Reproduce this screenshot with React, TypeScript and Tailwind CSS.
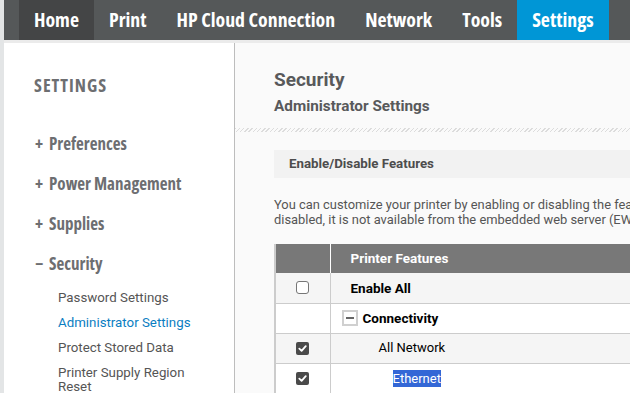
function CheckBox({ checked }: { checked: boolean }) {
  if (checked) {
    return (
      <span className="flex h-[13px] w-[13px] items-center justify-center rounded-[2px] bg-[#4a4a4a]">
        <svg width="9" height="9" viewBox="0 0 10 10">
          <path d="M1.5 5.2 L4 7.6 L8.6 2.4" fill="none" stroke="#fff" strokeWidth="2" strokeLinecap="round" strokeLinejoin="round" />
        </svg>
      </span>
    );
  }
  return <span className="block h-[13px] w-[13px] rounded-[3px] border border-[#767676] bg-white" />;
}

const cond = "font-['Open_Sans',sans-serif] [font-stretch:75%]";

export default function App() {
  const tabs = ['Home', 'Print', 'HP Cloud Connection', 'Network', 'Tools', 'Settings'];
  return (
    <div className="flex h-[393px] w-[630px] overflow-hidden bg-[#fafafa] font-['Roboto',sans-serif]">
      <div className="w-[4px] shrink-0 bg-[#e3e5e6]" />
      <div className="flex min-w-0 flex-1 flex-col">
        <nav className={`flex h-[40px] shrink-0 bg-[#555859] pl-[15px] ${cond}`}>
          {tabs.map((t) => (
            <div
              key={t}
              className={`flex items-center px-[15px] pb-[1px] text-[19.8px] font-bold leading-none text-white ${
                t === 'Home' ? 'bg-[#444546]' : t === 'Settings' ? 'bg-[#0096d6]' : ''
              }`}
            >
              {t}
            </div>
          ))}
        </nav>
        <div className="h-[3px] shrink-0 bg-[#ebebeb]" />
        <div className="flex min-h-0 flex-1">
          <aside className="w-[231px] shrink-0 border-r border-[#bdbdbd] bg-white pl-[30px]">
            <div className={`pt-[32px] text-[18px] font-bold leading-[20px] tracking-[1px] text-[#6d6e71] ${cond}`}>SETTINGS</div>
            <ul className={`mt-[39px] flex flex-col gap-[20px] text-[17px] font-bold leading-[20px] text-[#6d6e71] ${cond}`}>
              <li className="flex items-center"><span className="w-[15px] pl-[1px]">+</span>Preferences</li>
              <li className="flex items-center"><span className="w-[15px] pl-[1px]">+</span>Power Management</li>
              <li className="flex items-center"><span className="w-[15px] pl-[1px]">+</span>Supplies</li>
              <li className="flex items-center"><span className="w-[15px] pl-[1px]">−</span>Security</li>
            </ul>
            <ul className="mt-[17px] flex flex-col gap-[11px] pl-[24px] text-[13.3px] leading-[14px] text-[#555555]">
              <li>Password Settings</li>
              <li className="text-[#0a7ec2]">Administrator Settings</li>
              <li>Protect Stored Data</li>
              <li>Printer Supply Region<br />Reset</li>
            </ul>
          </aside>
          <main className="min-w-0 flex-1">
            <div className="pl-[39px] pt-[25px] text-[#58595b]">
              <h1 className="text-[19px] font-bold leading-[24px]">Security</h1>
              <h2 className="mt-[4px] text-[15.3px] font-bold leading-[20px]">Administrator Settings</h2>
            </div>
            <div className="mt-[12px] h-[4px] w-full bg-[repeating-linear-gradient(135deg,#dcdcdc_0px,#dcdcdc_1px,transparent_1px,transparent_3px)]" />
            <div className="ml-[39px] mt-[18px] flex h-[28px] w-[500px] items-center bg-[#f2f2f2] pl-[15px] text-[13.3px] font-bold text-[#4d4d4d]">
              Enable/Disable Features
            </div>
            <div className="ml-[39px] mt-[19px] text-[12.9px] leading-[15px] text-[#555555]">
              <div className="whitespace-nowrap">You can customize your printer by enabling or disabling the features below. When a feature is</div>
              <div className="whitespace-nowrap">disabled, it is not available from the embedded web server (EWS), the printer control panel, or</div>
            </div>
            <table className="ml-[39px] mt-[17px] w-[500px] border-collapse border-l-2 border-[#cccccc] text-[13.5px]">
              <tbody>
                <tr className="h-[29px] bg-[#787878] text-white">
                  <td className="w-[55px] border-r border-white" />
                  <td className="pl-[20px] font-bold">Printer Features</td>
                </tr>
                <tr className="h-[30px] border-b border-[#cccccc] bg-[#f5f5f5]">
                  <td className="border-r border-[#cccccc]"><div className="flex justify-center"><CheckBox checked={false} /></div></td>
                  <td className="pl-[20px] font-bold text-black">Enable All</td>
                </tr>
                <tr className="h-[30px] border-b border-[#cccccc] bg-white">
                  <td className="border-r border-[#cccccc]" />
                  <td className="pl-[11px] font-bold text-black">
                    <div className="flex items-center gap-[5px]">
                      <span className="flex h-[16px] w-[16px] items-center justify-center border-2 border-[#d0d0d0] bg-white">
                        <span className="block h-[1.5px] w-[8px] bg-[#666]" />
                      </span>
                      Connectivity
                    </div>
                  </td>
                </tr>
                <tr className="h-[30px] border-b border-[#cccccc] bg-[#f5f5f5]">
                  <td className="border-r border-[#cccccc]"><div className="flex justify-center"><CheckBox checked /></div></td>
                  <td className="pl-[48px] text-[13px] text-black">All Network</td>
                </tr>
                <tr className="h-[30px] bg-white">
                  <td className="border-r border-[#cccccc]"><div className="flex justify-center"><CheckBox checked /></div></td>
                  <td className="pl-[62px] text-[13px] text-black"><span className="bg-[#3367d6] py-[1px] text-white">Ethernet</span></td>
                </tr>
              </tbody>
            </table>
          </main>
        </div>
      </div>
    </div>
  );
}
